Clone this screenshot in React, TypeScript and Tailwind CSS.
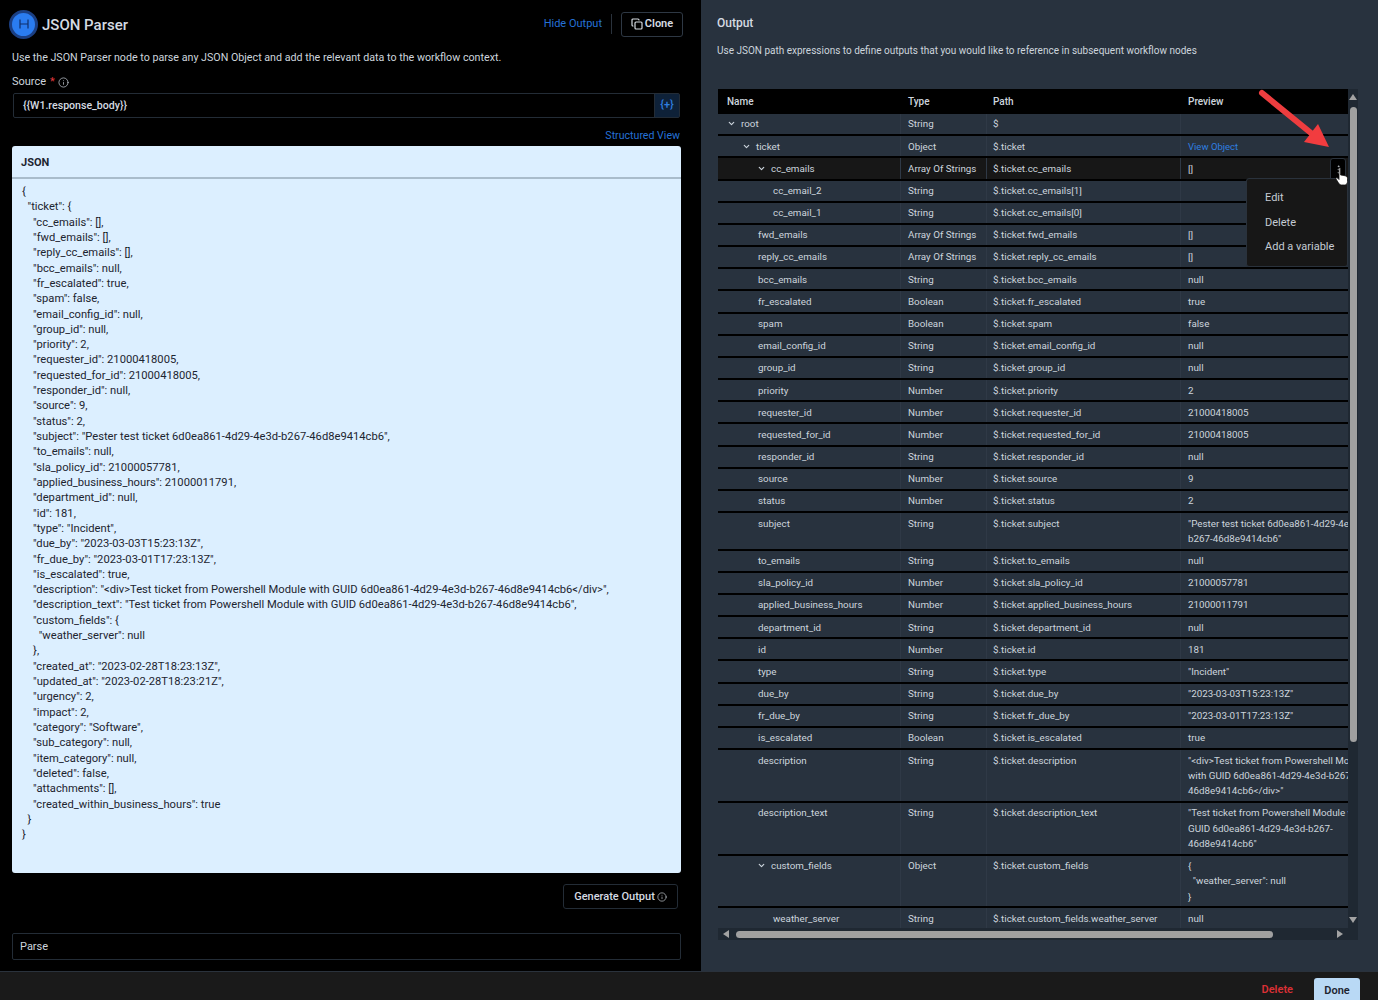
import React from "react";
import { ChevronDown, Copy, EllipsisVertical, Info } from "lucide-react";

const FONT = "font-['Roboto','Noto_Sans',sans-serif]";

const JSON_TEXT = `{
  "ticket": {
    "cc_emails": [],
    "fwd_emails": [],
    "reply_cc_emails": [],
    "bcc_emails": null,
    "fr_escalated": true,
    "spam": false,
    "email_config_id": null,
    "group_id": null,
    "priority": 2,
    "requester_id": 21000418005,
    "requested_for_id": 21000418005,
    "responder_id": null,
    "source": 9,
    "status": 2,
    "subject": "Pester test ticket 6d0ea861-4d29-4e3d-b267-46d8e9414cb6",
    "to_emails": null,
    "sla_policy_id": 21000057781,
    "applied_business_hours": 21000011791,
    "department_id": null,
    "id": 181,
    "type": "Incident",
    "due_by": "2023-03-03T15:23:13Z",
    "fr_due_by": "2023-03-01T17:23:13Z",
    "is_escalated": true,
    "description": "<div>Test ticket from Powershell Module with GUID 6d0ea861-4d29-4e3d-b267-46d8e9414cb6</div>",
    "description_text": "Test ticket from Powershell Module with GUID 6d0ea861-4d29-4e3d-b267-46d8e9414cb6",
    "custom_fields": {
      "weather_server": null
    },
    "created_at": "2023-02-28T18:23:13Z",
    "updated_at": "2023-02-28T18:23:21Z",
    "urgency": 2,
    "impact": 2,
    "category": "Software",
    "sub_category": null,
    "item_category": null,
    "deleted": false,
    "attachments": [],
    "created_within_business_hours": true
  }
}`;

type Row = { n: string; l: 0 | 1 | 2; c?: boolean; t: string; p: string; v?: string; link?: boolean; active?: boolean };

const ROWS: Row[] = [
  { n: "root", l: 0, c: true, t: "String", p: "$" },
  { n: "ticket", l: 1, c: true, t: "Object", p: "$.ticket", v: "View Object", link: true },
  { n: "cc_emails", l: 2, c: true, t: "Array Of Strings", p: "$.ticket.cc_emails", v: "[]", active: true },
  { n: "cc_email_2", l: 2, t: "String", p: "$.ticket.cc_emails[1]" },
  { n: "cc_email_1", l: 2, t: "String", p: "$.ticket.cc_emails[0]" },
  { n: "fwd_emails", l: 1, t: "Array Of Strings", p: "$.ticket.fwd_emails", v: "[]" },
  { n: "reply_cc_emails", l: 1, t: "Array Of Strings", p: "$.ticket.reply_cc_emails", v: "[]" },
  { n: "bcc_emails", l: 1, t: "String", p: "$.ticket.bcc_emails", v: "null" },
  { n: "fr_escalated", l: 1, t: "Boolean", p: "$.ticket.fr_escalated", v: "true" },
  { n: "spam", l: 1, t: "Boolean", p: "$.ticket.spam", v: "false" },
  { n: "email_config_id", l: 1, t: "String", p: "$.ticket.email_config_id", v: "null" },
  { n: "group_id", l: 1, t: "String", p: "$.ticket.group_id", v: "null" },
  { n: "priority", l: 1, t: "Number", p: "$.ticket.priority", v: "2" },
  { n: "requester_id", l: 1, t: "Number", p: "$.ticket.requester_id", v: "21000418005" },
  { n: "requested_for_id", l: 1, t: "Number", p: "$.ticket.requested_for_id", v: "21000418005" },
  { n: "responder_id", l: 1, t: "String", p: "$.ticket.responder_id", v: "null" },
  { n: "source", l: 1, t: "Number", p: "$.ticket.source", v: "9" },
  { n: "status", l: 1, t: "Number", p: "$.ticket.status", v: "2" },
  { n: "subject", l: 1, t: "String", p: "$.ticket.subject", v: '"Pester test ticket 6d0ea861-4d29-4e3d-\nb267-46d8e9414cb6"' },
  { n: "to_emails", l: 1, t: "String", p: "$.ticket.to_emails", v: "null" },
  { n: "sla_policy_id", l: 1, t: "Number", p: "$.ticket.sla_policy_id", v: "21000057781" },
  { n: "applied_business_hours", l: 1, t: "Number", p: "$.ticket.applied_business_hours", v: "21000011791" },
  { n: "department_id", l: 1, t: "String", p: "$.ticket.department_id", v: "null" },
  { n: "id", l: 1, t: "Number", p: "$.ticket.id", v: "181" },
  { n: "type", l: 1, t: "String", p: "$.ticket.type", v: '"Incident"' },
  { n: "due_by", l: 1, t: "String", p: "$.ticket.due_by", v: '"2023-03-03T15:23:13Z"' },
  { n: "fr_due_by", l: 1, t: "String", p: "$.ticket.fr_due_by", v: '"2023-03-01T17:23:13Z"' },
  { n: "is_escalated", l: 1, t: "Boolean", p: "$.ticket.is_escalated", v: "true" },
  { n: "description", l: 1, t: "String", p: "$.ticket.description", v: '"<div>Test ticket from Powershell Module\nwith GUID 6d0ea861-4d29-4e3d-b267-\n46d8e9414cb6</div>"' },
  { n: "description_text", l: 1, t: "String", p: "$.ticket.description_text", v: '"Test ticket from Powershell Module with\nGUID 6d0ea861-4d29-4e3d-b267-\n46d8e9414cb6"' },
  { n: "custom_fields", l: 2, c: true, t: "Object", p: "$.ticket.custom_fields", v: '{\n  "weather_server": null\n}' },
  { n: "weather_server", l: 2, t: "String", p: "$.ticket.custom_fields.weather_server", v: "null" },
];

const CHEVRON_PAD = ["pl-[9px]", "pl-[24px]", "pl-[39px]"];
const LEAF_PAD = ["pl-[25px]", "pl-[40px]", "pl-[55px]"];

function TableRow({ r }: { r: Row }) {
  return (
    <div className={`flex w-[640px] border-b-2 border-black leading-[15.3px] ${r.active ? "bg-[#171717]" : "bg-[#28323e]"}`}>
      <div className={`w-[182px] shrink-0 py-[2.45px] flex items-start ${r.c ? CHEVRON_PAD[r.l] : LEAF_PAD[r.l]}`}>
        {r.c && <ChevronDown className="w-[9px] h-[9px] mr-[5px] mt-[3px] shrink-0" strokeWidth={3} />}
        <span>{r.n}</span>
      </div>
      <div className="w-[86px] shrink-0 py-[2.45px] pl-[7px] border-l border-[#2f3946] whitespace-nowrap">{r.t}</div>
      <div className="w-[194px] shrink-0 py-[2.45px] pl-[6px] border-l border-[#2f3946] whitespace-nowrap">{r.p}</div>
      <div className={`w-[178px] shrink-0 py-[2.45px] pl-[7px] border-l border-[#2f3946] whitespace-pre ${r.link ? "text-[#2f7fe0] text-[9.5px]" : ""}`}>
        {r.v ?? ""}
      </div>
    </div>
  );
}

export default function App() {
  return (
    <div className={`relative w-[1378px] h-[1000px] overflow-hidden flex flex-col bg-black text-[#cdd5dd] text-[11px] ${FONT}`}>
      <div className="flex h-[971px] shrink-0">
        {/* Left panel */}
        <div className="w-[701px] shrink-0 bg-black flex flex-col px-[12px]">
          <div className="h-[48px] flex items-center shrink-0">
            <div className="-ml-[3px] w-[29px] h-[29px] rounded-full bg-[#2a7cf0] border-[3px] border-[#1b3f83] flex items-center justify-center">
              <svg width="12" height="10" viewBox="0 0 12 10" fill="none" stroke="#0f2f6b" strokeWidth="1.2">
                <path d="M2 0.5V9.5M10 0.5V9.5M2 5H10" />
              </svg>
            </div>
            <div className="ml-[4px] mt-[2px] text-[15px] font-medium text-[#d5dbe2]">JSON Parser</div>
            <div className="ml-auto mr-[6px] flex items-center">
              <span className="text-[#2571d6] text-[11px] mt-[1px]">Hide Output</span>
              <div className="w-px h-[20px] bg-[#2a323c] mx-[9px]" />
              <button className="w-[62px] h-[25px] rounded-[3px] border border-[#2e3844] flex items-center justify-center gap-[2px] text-[11px] font-semibold text-[#d5dbe2]">
                <Copy className="w-[12px] h-[12px]" strokeWidth={2.4} />
                Clone
              </button>
            </div>
          </div>
          <div className="mt-[2px] h-[16px] leading-[16px] text-[10.7px] text-[#cdd5dd]">
            Use the JSON Parser node to parse any JSON Object and add the relevant data to the workflow context.
          </div>
          <div className="mt-[8px] h-[16px] flex items-center text-[11px]">
            Source <span className="text-[#e0393e] ml-[4px] mr-[3px]">*</span>
            <Info className="w-[11px] h-[11px]" strokeWidth={1.5} />
          </div>
          <div className="mt-[3px] ml-[1px] mr-[9px] h-[25px] flex border border-[#232c36] rounded-[2px]">
            <div className="flex-1 pl-[9px] pt-[1px] flex items-center font-medium text-[10.6px] text-[#d5dbe2]">{"{{W1.response_body}}"}</div>
            <div className="w-[25px] bg-[#0e2138] border-l border-[#232c36] flex items-center justify-center text-[#2f7fe0] text-[11px] font-medium">{"{+}"}</div>
          </div>
          <div className="mt-[10px] h-[16px] mr-[9px] text-right text-[#2571d6] text-[10.6px] leading-[16px]">Structured View</div>
          <div className="mt-[2px] h-[727px] w-[669px] shrink-0 rounded-[3px] bg-[#dcefff] text-[#1d2530] overflow-hidden flex flex-col">
            <div className="h-[33px] shrink-0 pl-[9px] pt-[3px] flex items-center text-[11px] font-bold border-b-2 border-[#a9bccb]">JSON</div>
            <pre className={`pl-[10px] pt-[5px] text-[11.2px] leading-[15.31px] ${FONT}`}>{JSON_TEXT}</pre>
          </div>
          <div className="mt-[11px] flex justify-end pr-[11px]">
            <button className="w-[115px] h-[25px] pt-[1px] rounded-[3px] border border-[#232c36] flex items-center justify-center gap-[2px] text-[11px] font-medium text-[#d5dbe2]">
              Generate Output
              <Info className="w-[10px] h-[10px]" strokeWidth={1.5} />
            </button>
          </div>
          <div className="mt-[24px] h-[27px] w-[669px] rounded-[2px] border border-[#232c36] pl-[7px] pt-[1px] flex items-center text-[11px]">Parse</div>
        </div>
        {/* Right panel */}
        <div className="flex-1 bg-[#28323e] flex flex-col pl-[16px] pr-[20px] min-w-0">
          <div className="mt-[15px] h-[17px] text-[12px] font-medium leading-[17px] text-[#d5dbe2]">Output</div>
          <div className="mt-[11px] h-[16px] text-[10px] leading-[16px]">Use JSON path expressions to define outputs that you would like to reference in subsequent workflow nodes</div>
          <div className="mt-[30px] ml-[1px] h-[851px] w-[640px] shrink-0 flex flex-col bg-[#1f2832]">
            <div className="flex h-[839px] min-h-0">
              <div className="relative w-[630px] overflow-hidden text-[9.8px]">
                <div className="flex w-[640px] h-[25px] bg-black items-center font-medium text-[#cdd5dd] text-[10px]">
                  <div className="w-[182px] pl-[9px]">Name</div>
                  <div className="w-[86px] pl-[8px]">Type</div>
                  <div className="w-[194px] pl-[7px]">Path</div>
                  <div className="w-[178px] pl-[8px]">Preview</div>
                </div>
                {ROWS.map((r) => (
                  <TableRow key={r.n} r={r} />
                ))}
                {/* kebab button */}
                <div className="absolute left-[612px] top-[69px] w-[16px] h-[23px] rounded-[3px] bg-black border border-[#2a323c] flex items-center justify-center text-[#d5dbe2]">
                  <EllipsisVertical className="w-[11px] h-[11px]" strokeWidth={1.5} />
                </div>
                {/* dropdown */}
                <div className="absolute left-[528px] top-[89px] w-[102px] h-[89px] bg-[#171717] border border-[#2a323c] rounded-[3px] pl-[18px] pt-[11px] flex flex-col gap-[9px] text-[11px] leading-[15.5px] text-[#c5ccd4]">
                  <span>Edit</span>
                  <span>Delete</span>
                  <span>Add a variable</span>
                </div>
              </div>
              {/* vertical scrollbar */}
              <div className="w-[10px] shrink-0 flex flex-col items-center relative">
                <div className="mt-[5px] w-0 h-0 border-x-[4px] border-x-transparent border-b-[6px] border-b-[#a3a3a3]" />
                <div className="mt-[7px] w-[7px] h-[635px] rounded-full bg-[#a0a0a0]" />
                <div className="mt-auto mb-[5px] w-0 h-0 border-x-[4px] border-x-transparent border-t-[6px] border-t-[#a3a3a3]" />
              </div>
            </div>
            {/* horizontal scrollbar */}
            <div className="h-[12px] shrink-0 flex items-center pl-[5px] pr-[15px]">
              <div className="w-0 h-0 border-y-[4px] border-y-transparent border-r-[6px] border-r-[#a3a3a3]" />
              <div className="ml-[7px] w-[537px] h-[7px] rounded-full bg-[#a0a0a0]" />
              <div className="ml-auto w-0 h-0 border-y-[4px] border-y-transparent border-l-[6px] border-l-[#a3a3a3]" />
            </div>
          </div>
        </div>
      </div>
      {/* Footer */}
      <div className="flex-1 bg-[#1a1a1a] border-t border-[#2a323c] flex items-start justify-end pr-[18px] relative">
        <span className="mt-[10px] mr-[21px] text-[#d93035] text-[11px] font-semibold">Delete</span>
        <button className="mt-[6px] w-[46px] h-[30px] rounded-[3px] bg-[#b9d9f5] text-[#1d2530] text-[11px] font-semibold pb-[4px]">Done</button>
      </div>
      {/* annotation arrow */}
      <svg className="absolute left-[1255px] top-[85px]" width="80" height="65" viewBox="0 0 80 65" fill="none">
        <path d="M7 8L56 48" stroke="#ee3d3f" strokeWidth="6" strokeLinecap="round" />
        <path d="M49 57L74 62L63 39Z" fill="#f23c3f" />
      </svg>
      {/* hand cursor */}
      <svg className="absolute left-[1335px] top-[167px]" width="14" height="19" viewBox="0 0 14 19">
        <path d="M4 1.5C4 .6 5.6.6 5.6 1.5V8L9 8.5C11.5 9 12.5 9.8 12.5 11.5V14.5C12.5 16.5 11.5 18 9.5 18H6.5C5 18 4.2 17 3.4 15.8L1 12C.5 11 1.7 10.2 2.5 11L4 12.5Z" fill="#fff" stroke="#111" strokeWidth="0.8" />
      </svg>
    </div>
  );
}
